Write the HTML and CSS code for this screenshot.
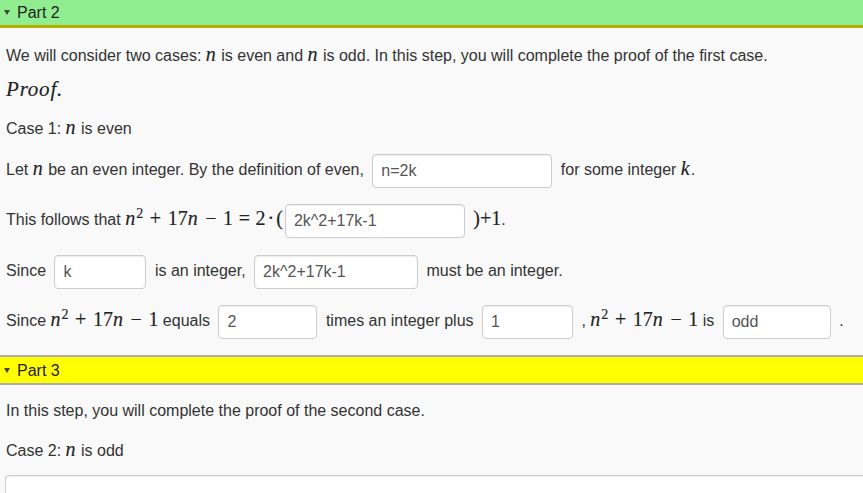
FILE: index.html
```html
<!DOCTYPE html>
<html>
<head>
<meta charset="utf-8">
<link rel="stylesheet" href="styles.css">
</head>
<body>
<section class="part">
  <div class="hdr hdr-green"><span class="caret"></span>Part 2</div>
  <div class="content">
    <p class="line l1">We will consider two cases: <span class="math"><i>n</i></span> is even and <span class="math"><i>n</i></span> is odd. In this step, you will complete the proof of the first case.</p>
    <p class="proof">Proof.</p>
    <p class="line case">Case 1: <span class="math"><i>n</i></span> is even</p>
    <div class="row r1">Let <span class="math"><i>n</i></span> be an even integer. By the definition of even, <input class="inp w180" value="n=2k"> for some integer <span class="math"><i>k</i></span>.</div>
    <div class="row r2">This follows that <span class="math"><i>n</i><sup>2</sup><span class="bin">+</span>17<i>n</i><span class="bin">−</span>1<span class="rel">=</span>2<span class="dot">·</span>(</span><input class="inp w180 tight" value="2k^2+17k-1"> <span class="math">)+1</span>.</div>
    <div class="row r3">Since <input class="inp w92" value="k"> is an integer, <input class="inp w164" value="2k^2+17k-1"> must be an integer.</div>
    <div class="row r4">Since <span class="math"><i>n</i><sup>2</sup><span class="bin">+</span>17<i>n</i><span class="bin">−</span>1</span> equals <input class="inp w99" value="2"> times an integer plus <input class="inp w91" value="1"> , <span class="math"><i>n</i><sup>2</sup><span class="bin">+</span>17<i>n</i><span class="bin">−</span>1</span> is <input class="inp w108" value="odd"> .</div>
  </div>
</section>
<section class="part part3">
  <div class="hdr hdr-yellow"><span class="caret"></span>Part 3</div>
  <div class="content">
    <p class="line l3">In this step, you will complete the proof of the second case.</p>
    <p class="line case2">Case 2: <span class="math"><i>n</i></span> is odd</p>
    <div class="bigbox"></div>
  </div>
</section>
</body>
</html>
```
FILE: styles.css
```css
html, body {
  margin: 0;
  padding: 0;
  background: #f9f9f9;
  overflow: hidden;
}
body {
  font-family: "Liberation Sans", Arial, sans-serif;
  font-size: 16px;
  line-height: 18px;
  color: #333;
}
p { margin: 0; }

.hdr {
  padding-left: 4px;
  color: #222;
}
.hdr-green {
  height: 25px;
  line-height: 25px;
  background: #90ee90;
  border-bottom: 3px solid #b3ae00;
}
.hdr-yellow {
  height: 26px;
  line-height: 27px;
  background: #ffff00;
  border-top: 2px solid #acacac;
  border-bottom: 2px solid #acacac;
}
.caret {
  display: inline-block;
  width: 0;
  height: 0;
  border-left: 3.5px solid transparent;
  border-right: 3.5px solid transparent;
  border-top: 5px solid #444;
  margin-right: 7px;
  vertical-align: 3px;
}

.content {
  padding: 0 6px;
}

.math {
  font-family: "Liberation Serif", "Times New Roman", serif;
  font-size: 20px;
  line-height: 18px;
  color: #222;
  -webkit-text-stroke: 0.15px #222;
}
.math i {
  font-style: italic;
  padding-right: 1px;
}
.math sup {
  font-size: 0.7em;
  vertical-align: baseline;
  position: relative;
  top: -0.55em;
}
.math .bin { margin: 0 0.33em; }
.math .rel { margin: 0 0.28em; }
.math .dot { margin: 0 0.1em; }

.line { height: 18px; }
.l1 { margin-top: 17px; }
.proof {
  margin-top: 14px;
  height: 24px;
  font-family: "Liberation Serif", "Times New Roman", serif;
  font-style: italic;
  font-size: 21px;
  letter-spacing: 0.8px;
  line-height: 24px;
  color: #222;
  -webkit-text-stroke: 0.15px #222;
}
.case { margin-top: 17px; }

.row { height: 34px; }
.r1 { margin-top: 18px; }
.r2 { margin-top: 16px; }
.r3 { margin-top: 17px; }
.r4 { margin-top: 16px; }

.inp {
  box-sizing: border-box;
  height: 34px;
  border: 1px solid #ccc;
  border-radius: 4px;
  background: #fff;
  box-shadow: inset 0 1px 1px rgba(0, 0, 0, 0.075);
  padding: 0 8px;
  margin: 0 4px;
  font-family: "Liberation Sans", Arial, sans-serif;
  font-size: 16px;
  color: #555;
  vertical-align: middle;
  outline: none;
}
.tight { margin-left: 2px; }
.w180 { width: 180px; }
.w92 { width: 92px; }
.w164 { width: 164px; }
.w99 { width: 99px; }
.w91 { width: 91px; }
.w108 { width: 108px; }

.part3 { margin-top: 16px; }
.l3 { margin-top: 17px; }
.case2 { margin-top: 20px; }
.bigbox {
  margin-top: 17px;
  margin-left: -1px;
  margin-right: -20px;
  height: 60px;
  background: #fff;
  border: 1px solid #ccc;
  border-radius: 4px;
  box-shadow: inset 0 1px 1px rgba(0, 0, 0, 0.075);
}
```
